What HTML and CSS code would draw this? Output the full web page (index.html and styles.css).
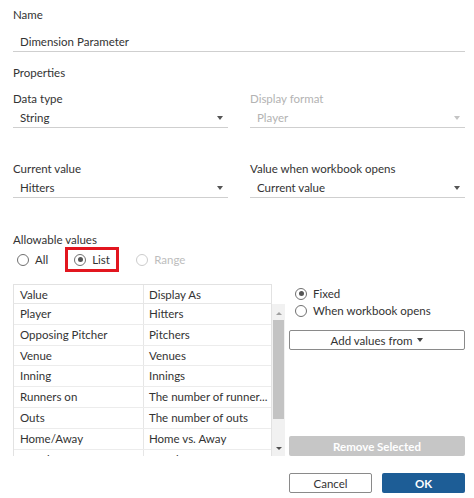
FILE: index.html
```html
<!DOCTYPE html>
<html>
<head>
<meta charset="utf-8">
<link rel="stylesheet" href="styles.css">
</head>
<body>
<div class="dialog">
  <div class="label lbl-name">Name</div>
  <div class="input name-input">Dimension Parameter</div>

  <div class="section-title">Properties</div>

  <div class="grid row1">
    <div class="field">
      <div class="label">Data type</div>
      <div class="select"><span>String</span><span class="caret"></span></div>
    </div>
    <div class="field disabled">
      <div class="label">Display format</div>
      <div class="select"><span>Player</span><span class="caret"></span></div>
    </div>
  </div>

  <div class="grid row2">
    <div class="field">
      <div class="label">Current value</div>
      <div class="select"><span>Hitters</span><span class="caret"></span></div>
    </div>
    <div class="field">
      <div class="label">Value when workbook opens</div>
      <div class="select"><span>Current value</span><span class="caret"></span></div>
    </div>
  </div>

  <div class="label allow-label">Allowable values</div>
  <div class="radio-row">
    <label class="radio opt-all"><span class="circle"></span><span>All</span></label>
    <label class="radio opt-list highlight"><span class="circle checked"></span><span>List</span></label>
    <label class="radio opt-range disabled"><span class="circle"></span><span>Range</span></label>
  </div>

  <div class="lower">
    <div class="table">
      <div class="thead">
        <div class="cell c1">Value</div>
        <div class="cell c2">Display As</div>
      </div>
      <div class="tbody-wrap">
        <div class="tbody">
          <div class="tr"><div class="cell c1">Player</div><div class="cell c2">Hitters</div></div>
          <div class="tr"><div class="cell c1">Opposing Pitcher</div><div class="cell c2">Pitchers</div></div>
          <div class="tr"><div class="cell c1">Venue</div><div class="cell c2">Venues</div></div>
          <div class="tr"><div class="cell c1">Inning</div><div class="cell c2">Innings</div></div>
          <div class="tr"><div class="cell c1">Runners on</div><div class="cell c2">The number of runner...</div></div>
          <div class="tr"><div class="cell c1">Outs</div><div class="cell c2">The number of outs</div></div>
          <div class="tr"><div class="cell c1">Home/Away</div><div class="cell c2">Home vs. Away</div></div>
          <div class="tr"><div class="cell c1">Weather</div><div class="cell c2">Weather</div></div>
        </div>
        <div class="scrollbar">
          <span class="arr up"></span>
          <span class="thumb"></span>
          <span class="arr down"></span>
        </div>
      </div>
    </div>
    <div class="side">
      <label class="radio side-radio"><span class="circle checked"></span><span>Fixed</span></label>
      <label class="radio side-radio"><span class="circle"></span><span>When workbook opens</span></label>
      <div class="btn btn-add">Add values from <span class="caret dark"></span></div>
      <div class="btn btn-remove">Remove Selected</div>
    </div>
  </div>

  <div class="footer">
    <div class="btn btn-cancel">Cancel</div>
    <div class="btn btn-ok">OK</div>
  </div>
</div>
</body>
</html>
```

FILE: styles.css
```css
* { box-sizing: border-box; }
html, body { margin: 0; padding: 0; background: #fff; }
body {
  font-family: Lato, "Noto Sans", "Liberation Sans", sans-serif;
  font-size: 11.5px;
  color: #333;
  width: 474px;
  height: 498px;
  overflow: hidden;
}
.dialog { padding: 7px 9px 0 13px; width: 474px; }

.label { line-height: 16px; height: 16px; color: #333; }
.input, .select {
  height: 19px;
  line-height: 18px;
  padding-left: 7px;
  border-bottom: 1px solid #cfcfcf;
}
.name-input { margin-top: 10px; }
.section-title { margin-top: 13px; line-height: 16px; }

.grid {
  display: grid;
  grid-template-columns: 215px 215px;
  column-gap: 22px;
}
.row1 { margin-top: 10px; }
.row2 { margin-top: 33px; }
.field .select { margin-top: 2px; display: flex; justify-content: space-between; align-items: center; padding-right: 5px; }
.caret {
  display: inline-block;
  width: 0; height: 0;
  border-left: 3px solid transparent;
  border-right: 3px solid transparent;
  border-top: 4px solid #555;
}
.field.disabled .label, .field.disabled .select { color: #b3b3b3; }
.field.disabled .caret { border-top-color: #c4c4c4; }

.allow-label { margin-top: 35px; line-height: 14px; height: 14px; }
.radio-row { display: flex; align-items: center; height: 25px; }
.radio { display: flex; align-items: center; gap: 6px; }
.circle {
  width: 12px; height: 12px;
  border: 1px solid #707070;
  border-radius: 50%;
  background: #fff;
  position: relative;
  flex: none;
}
.circle.checked::after {
  content: "";
  position: absolute;
  left: 2.5px; top: 2.5px;
  width: 5px; height: 5px;
  border-radius: 50%;
  background: #555;
}
.opt-all { margin-left: 4px; }
.highlight {
  margin-left: 17px;
  height: 25px;
  width: 54px;
  border: 3px solid #e2161f;
  padding-left: 6px;
}
.opt-range { margin-left: 17px; }
.radio.disabled { color: #bdbdbd; }
.radio.disabled .circle { border-color: #cccccc; }

.lower { display: flex; margin-top: 12px; gap: 4px; height: 172px; }
.table { width: 272px; display: flex; flex-direction: column; }
.thead {
  display: flex;
  height: 20px;
  width: 259px;
  border: 1px solid #e2e2e2;
  border-bottom-color: #e6e6e6;
}
.cell { line-height: 19px; white-space: nowrap; overflow: hidden; }
.c1 { width: 130px; padding-left: 6px; border-right: 1px solid #e6e6e6; }
.c2 { flex: 1; padding-left: 5px; }
.tbody-wrap { display: flex; height: 152px; overflow: hidden; }
.tbody { width: 259px; border-left: 1px solid #e2e2e2; border-right: 1px solid #e2e2e2; }
.tr { display: flex; height: 20.8px; border-bottom: 1px solid #ececec; }
.tr .cell { line-height: 20px; }
.scrollbar {
  width: 13px;
  background: #f1f1f1;
  display: flex;
  flex-direction: column;
  align-items: center;
  position: relative;
}
.arr { width: 0; height: 0; border-left: 3px solid transparent; border-right: 3px solid transparent; }
.arr.up { border-bottom: 3px solid #a0a0a0; margin-top: 8px; }
.arr.down { border-top: 3px solid #505050; margin-top: auto; margin-bottom: 6px; }
.thumb { width: 11px; height: 99px; background: #c3c3c3; margin-top: 5px; }

.side { width: 176px; display: flex; flex-direction: column; }
.side-radio { height: 17px; padding-left: 6px; }
.side-radio:first-child { margin-top: 1px; }
.btn {
  height: 20px;
  border-radius: 2px;
  display: flex;
  align-items: center;
  justify-content: center;
  gap: 5px;
}
.btn-add { margin-top: 11px; border: 1px solid #8a8a8a; color: #333; }
.caret.dark { border-top-color: #444; }
.btn-remove { margin-top: auto; background: #c6c6c6; color: #fff; font-weight: bold; }

.footer { display: flex; justify-content: flex-end; gap: 10px; margin-top: 17px; width: 452px; }
.btn-cancel { width: 83px; border: 1px solid #8a8a8a; color: #333; }
.btn-ok { width: 83px; background: #1d5d96; color: #fff; font-weight: bold; }
```
